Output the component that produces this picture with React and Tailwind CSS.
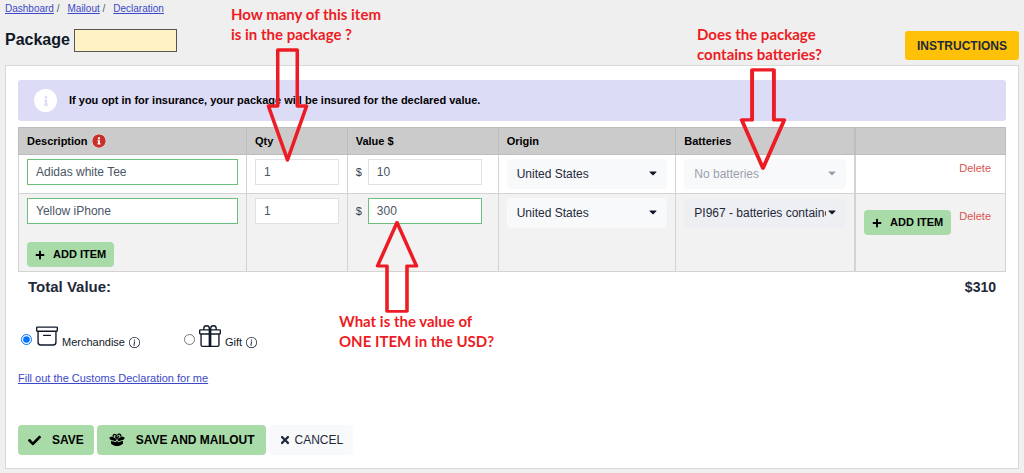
import React from "react";
import { BsArchive, BsGift, BsInfoCircle } from "react-icons/bs";
import { FaCheck, FaInfo, FaInfoCircle, FaPlus, FaTimes, FaCaretDown } from "react-icons/fa";

const items = [
  { id: 1, description: "Adidas white Tee", qty: "1", value: "10", origin: "United States", batteries: "No batteries" },
  { id: 2, description: "Yellow iPhone", qty: "1", value: "300", origin: "United States", batteries: "PI967 - batteries contained in equipment" },
];

const inputBase = "block h-[26px] w-full border bg-white px-2 text-xs text-gray-600 outline-none";

const AddItemButton = () => (
  <button className="flex h-[25px] items-center gap-2 whitespace-nowrap rounded-sm bg-[#a8dba8] px-2 text-[11px] font-bold text-black">
    <FaPlus className="size-[10px]" />
    ADD ITEM
  </button>
);

const Dropdown = ({ label, value, className }) => (
  <div className="relative">
    <select
      aria-label={label}
      defaultValue={value}
      className={`block h-[30px] w-full appearance-none rounded-sm pl-2.5 pr-5 text-xs outline-none ${className}`}
    >
      <option>{value}</option>
    </select>
    <FaCaretDown className={`pointer-events-none absolute right-2 top-2 size-3 ${value === "No batteries" ? "text-gray-400" : "text-gray-900"}`} />
  </div>
);

const ItemRow = ({ item, last }) => (
  <tr className={last ? "bg-[#f2f2f2]" : "bg-white"}>
    <td className="border border-[#d3d3d3] px-2 pt-1 pb-1 align-top">
      <input aria-label="Description" defaultValue={item.description} className={`${inputBase} border-[#6cbf7f]`} />
      {last && (
        <div className="mt-[18px]">
          <AddItemButton />
        </div>
      )}
    </td>
    <td className="border border-[#d3d3d3] px-2 pt-1 align-top">
      <input aria-label="Quantity" defaultValue={item.qty} className={`${inputBase} border-[#dee2e6]`} />
    </td>
    <td className="border border-[#d3d3d3] pt-1 pr-4 pb-2 pl-2 align-top">
      <label className="flex items-center gap-1.5 text-[11px] text-gray-700">
        $
        <input
          defaultValue={item.value}
          className={`${inputBase} ${last ? "border-[#6cbf7f]" : "border-[#dee2e6]"}`}
        />
      </label>
    </td>
    <td className="border border-[#d3d3d3] px-2 pt-1 pb-1 align-top">
      <Dropdown label="Origin" value={item.origin} className="bg-[#f8f9fa] text-gray-800" />
    </td>
    <td className="border border-[#d3d3d3] pt-1 pr-2 pb-1 pl-2 align-top">
      <Dropdown
        label="Batteries"
        value={item.batteries}
        className={last ? "bg-[#eeeff3] text-gray-800" : "bg-[#f8f9fa] text-gray-400"}
      />
    </td>
    <td className="border border-l-2 border-[#d3d3d3] px-2 pt-1 align-top">
      <div className={`flex justify-end gap-2 pr-1.5 ${last ? "pt-3" : ""}`}>
        {last && <AddItemButton />}
        <button className={`text-[11px] text-[#d9534f] ${last ? "self-start leading-3" : "leading-[18px]"}`}>Delete</button>
      </div>
    </td>
  </tr>
);

const MailoutIcon = () => (
  <svg viewBox="0 0 16 14" className="h-[14px] w-4" fill="currentColor">
    <path d="M0.3 4.5 3 3.5 7.8 6 6.6 8.2 1 6.6ZM15.7 4.5 13 3.5 8.2 6 9.4 8.2 15 6.6Z" />
    <path d="M2 7.8 6.9 9.3 8 7.5 9.1 9.3 14 7.8V10.7C12 12.3 10 13 8 13S4 12.3 2 10.7Z" />
    <path d="M4 3.6C4.2 1.4 5.6.8 6.9 1.9L8.2 3.2M8.6 2.2C9.8.4 11.8 1 12 3.6M6.2 3.6 8 5.2 10 3.2" fill="none" stroke="currentColor" strokeWidth="1.4" />
  </svg>
);

const DownArrow = ({ className }) => (
  <svg viewBox="0 0 44 114" preserveAspectRatio="none" className={`absolute ${className}`} fill="none" stroke="#ed1c24" strokeWidth="3.6">
    <path d="M12 2H32V57.5H41.5L22 111 2.5 57.5H12Z" strokeLinejoin="round" />
  </svg>
);

const noteText = "absolute whitespace-nowrap font-['Lato',sans-serif] text-[15px] font-bold leading-5 text-[#ed1c24]";

const App = () => {
  return (
    <div className="relative min-h-screen bg-[#efefef] px-[5px] pt-[3px] pb-1 font-['Liberation_Sans',Arial,sans-serif] text-gray-900">
      <nav className="flex gap-2 text-[10px] leading-3 text-gray-600">
        <span><a href="#dashboard" className="text-[#3b49c8] underline">Dashboard</a> /</span>
        <span><a href="#mailout" className="text-[#3b49c8] underline">Mailout</a> /</span>
        <a href="#declaration" className="text-[#3b49c8] underline">Declaration</a>
      </nav>

      <header className="mt-[13px] flex items-start justify-between">
        <label className="flex items-center gap-1 text-base font-bold leading-6">
          Package
          <input className="h-[23px] w-[103px] border border-[#555] bg-[#fff2c4] px-2 text-xs outline-none" />
        </label>
        <button className="mt-[3px] h-[29px] rounded-[3px] bg-[#ffc107] px-3 text-xs font-bold text-gray-800">
          INSTRUCTIONS
        </button>
      </header>

      <main className="mt-[5px] border border-[#d9d9d9] bg-white px-3 pt-[14px] pb-[13px]">
        <div className="flex h-[41px] items-center gap-3 rounded-[3px] bg-[#dddcf7] px-4 text-[11px] font-bold text-black">
          <span className="flex size-[23px] items-center justify-center rounded-full bg-white">
            <FaInfo className="size-[10px] text-[#dddcf7]" />
          </span>
          If you opt in for insurance, your package will be insured for the declared value.
        </div>

        <table className="mt-[6px] w-full table-fixed border-collapse border border-[#d3d3d3]">
          <thead>
            <tr className="h-[27px] bg-[#cbcbcb] text-left text-[11px] text-black">
              <th className="w-[23.1%] border border-[#bdbdbd] px-2">
                <span className="flex items-center gap-1">
                  Description <FaInfoCircle className="size-[14px] rounded-full bg-white text-[#c9302c]" />
                </span>
              </th>
              <th className="w-[10.2%] border border-[#bdbdbd] px-2">Qty</th>
              <th className="w-[15.3%] border border-[#bdbdbd] px-2">Value $</th>
              <th className="w-[18%] border border-[#bdbdbd] px-2">Origin</th>
              <th className="w-[18.2%] border border-[#bdbdbd] px-2">Batteries</th>
              <th className="border border-l-2 border-[#bdbdbd] px-2" />
            </tr>
          </thead>
          <tbody>
            {items.map((item, i) => (
              <ItemRow key={item.id} item={item} last={i === items.length - 1} />
            ))}
          </tbody>
        </table>

        <div className="mt-[5px] flex justify-between px-2.5 text-[15px] font-bold leading-5 text-gray-800">
          <span>Total Value:</span>
          <span className="text-sm leading-5">$310</span>
        </div>

        <div className="mt-7 flex gap-11 px-[3px] text-[11px]">
          <label className="flex items-end gap-1">
            <input type="radio" name="kind" defaultChecked className="mb-[3px] size-[11px]" />
            <BsArchive className="mb-px size-[22px]" />
            <span className="leading-3">Merchandise</span>
            <BsInfoCircle className="size-[11px]" />
          </label>
          <label className="flex items-end gap-1">
            <input type="radio" name="kind" className="mb-[3px] size-[11px]" />
            <BsGift className="mb-px size-[22px]" />
            <span className="leading-3">Gift</span>
            <BsInfoCircle className="size-[11px]" />
          </label>
        </div>

        <a href="#customs" className="mt-[22px] block w-fit text-[11px] leading-4 text-[#3b49c8] underline">
          Fill out the Customs Declaration for me
        </a>

        <div className="mt-[39px] flex gap-[3px] text-xs">
          <button className="flex h-[30px] items-center gap-[11px] rounded-sm bg-[#a8dba8] px-2.5 font-bold text-black">
            <FaCheck className="size-[13px]" />
            SAVE
          </button>
          <button className="flex h-[30px] items-center gap-[11px] rounded-sm bg-[#a8dba8] px-3 font-bold text-black">
            <MailoutIcon />
            SAVE AND MAILOUT
          </button>
          <button className="flex h-[30px] items-center gap-[3px] rounded-sm bg-[#f8f9fa] px-2.5 text-gray-800">
            <FaTimes className="size-3" />
            CANCEL
          </button>
        </div>
      </main>

      {/* help notes drawn over the form */}
      <p className={`${noteText} left-[231px] top-1`}>How many of this item<br />is in the package ?</p>
      <DownArrow className="left-[266px] top-12 h-[115px] w-[43px]" />
      <p className={`${noteText} left-[697px] top-6`}>Does the package<br />contains batteries?</p>
      <DownArrow className="left-[739px] top-[68px] h-[103px] w-[48px]" />
      <p className={`${noteText} left-[339px] top-[311px]`}>What is the value of<br />ONE ITEM in the USD?</p>
      <DownArrow className="left-[375px] top-[220px] h-[93px] w-[44px] rotate-180" />
    </div>
  );
};

export default App;
